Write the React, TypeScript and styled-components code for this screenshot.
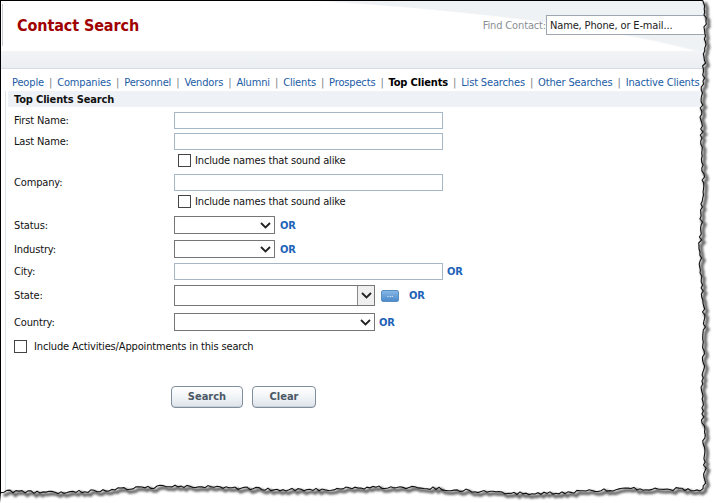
import styled, { createGlobalStyle } from "styled-components";

const GlobalStyle = createGlobalStyle`
  html, body {
    margin: 0;
    padding: 0;
    background: #fff;
  }
  body {
    font-family: "DejaVu Sans Condensed", "DejaVu Sans", sans-serif;
    font-stretch: semi-condensed;
    font-size: 11px;
    letter-spacing: -0.15px;
    color: #111;
  }
`;

const Frame = styled.div`
  position: relative;
  width: 714px;
  height: 503px;
  overflow: hidden;
  background: #fff;
`;

const Page = styled.div`
  height: 502px;
  border-left: 1px solid #000;
  border-top: 1px solid #000;
  display: flex;
  flex-direction: column;
`;

const Header = styled.div`
  height: 50px;
  display: flex;
  align-items: center;
  justify-content: space-between;
  background: radial-gradient(785px 110px at 0 100px, #fff 99%, #eff2f5 100%);
`;

const HeaderRule = styled.div`
  width: 1px;
  align-self: stretch;
  margin: 3px 0 5px 1px;
  background: #c8ced4;
`;

const Title = styled.h1`
  margin: 0 0 0 14px;
  flex: 1;
  font-family: "DejaVu Sans Condensed", "DejaVu Sans", sans-serif;
  font-size: 16px;
  letter-spacing: -0.1px;
  font-weight: bold;
  color: #a00000;
  padding-bottom: 2px;
`;

const Finder = styled.div`
  display: flex;
  align-items: center;
  margin-bottom: 2px;
`;

const FinderLabel = styled.span`
  color: #8a8f95;
`;

const FinderInput = styled.div`
  width: 160px;
  height: 18px;
  border: 1px solid #9ea7b0;
  background: #fff;
  color: #222;
  display: flex;
  align-items: center;
  padding-left: 3px;
  margin-right: 3px;
`;

const Band = styled.div`
  height: 17px;
  background: linear-gradient(#f2f4f6, #ebeef2);
  border-bottom: 1px solid #d6dce2;
`;

const Tabs = styled.div`
  height: 18px;
  display: flex;
  align-items: center;
  padding-left: 11px;
  white-space: nowrap;
  padding-top: 4px;
`;

const Tab = styled.span<{ $active?: boolean }>`
  color: ${({ $active }) => ($active ? "#000" : "#1b5ca6")};
  font-weight: ${({ $active }) => ($active ? "bold" : "normal")};
`;

const Sep = styled.span`
  color: #7a7f85;
  margin: 0 5px;
`;

const Panel = styled.div`
  flex: 1;
  margin-left: 4px;
  border-left: 1px solid #dbe2e9;
  display: flex;
  flex-direction: column;
`;

const PanelTitle = styled.div`
  margin-left: 2px;
  width: 692px;
  height: 16px;
  background: #eef2f6;
  font-weight: bold;
  padding-left: 6px;
  display: flex;
  align-items: center;
  box-sizing: border-box;
`;

const Form = styled.div`
  padding-left: 8px;
  display: flex;
  flex-direction: column;
`;

const Row = styled.div<{ $top: number; $h: number }>`
  margin-top: ${({ $top }) => $top}px;
  height: ${({ $h }) => $h}px;
  display: grid;
  grid-template-columns: 160px 1fr;
  align-items: center;
`;

const Label = styled.span`
  color: #111;
`;

const Controls = styled.div`
  display: flex;
  align-items: center;
  height: 100%;
`;

const TextBox = styled.div<{ $w: number }>`
  width: ${({ $w }) => $w}px;
  height: 100%;
  box-sizing: border-box;
  border: 1px solid #a8b7c5;
  background: #fff;
`;

const SelectBox = styled.div<{ $w: number }>`
  width: ${({ $w }) => $w}px;
  height: 100%;
  box-sizing: border-box;
  border: 1px solid #767676;
  background: #fff;
  display: flex;
  align-items: center;
  justify-content: flex-end;
  padding-right: 3px;
`;

const SelectButton = styled.div`
  width: 17px;
  height: 19px;
  box-sizing: border-box;
  border-left: 1px solid #8a8a8a;
  background: #efefef;
  display: flex;
  align-items: center;
  justify-content: center;
  margin-right: -3px;
`;

const Or = styled.span<{ $left: number }>`
  margin-left: ${({ $left }) => $left}px;
  color: #1e63b8;
  font-weight: 600;
`;

const Lookup = styled.div`
  margin-left: 6px;
  width: 18px;
  height: 12px;
  border-radius: 2px;
  background: linear-gradient(#86b7e6, #4d8bcb);
  border: 1px solid #5a8fc4;
  box-sizing: border-box;
  color: #fff;
  font-size: 8px;
  line-height: 8px;
  text-align: center;
`;

const CheckLine = styled.label<{ $gap: number }>`
  display: flex;
  align-items: center;
  gap: ${({ $gap }) => $gap}px;
  height: 100%;
`;

const Box = styled.span<{ $inset?: number }>`
  width: 13px;
  height: 13px;
  box-sizing: border-box;
  border: 1px solid #444;
  background: #fff;
  margin-left: ${({ $inset = 0 }) => $inset}px;
`;

const ActivityRow = styled.div`
  margin-top: 9px;
  height: 13px;
  display: flex;
`;

const Buttons = styled.div`
  margin-top: 33px;
  margin-left: 157px;
  display: flex;
  gap: 9px;
`;

const Button = styled.button<{ $w: number }>`
  width: ${({ $w }) => $w}px;
  height: 22px;
  border: 1px solid #7f8e9c;
  border-radius: 4px;
  background: linear-gradient(#ffffff 0%, #f1f4f7 50%, #dde3e9 100%);
  color: #4b5866;
  font-family: "DejaVu Sans Condensed", "DejaVu Sans", sans-serif;
  font-stretch: semi-condensed;
  font-size: 11px;
  font-weight: bold;
  padding: 0 0 2px;
  box-shadow: inset 0 -1px 0 #c7d0d8;
`;

const TearLayer = styled.svg`
  position: absolute;
  left: 0;
  top: 0;
  pointer-events: none;
`;

const Chevron = () => (
  <svg width="11" height="7" viewBox="0 0 11 7">
    <polyline points="1,1 5.5,5.5 10,1" fill="none" stroke="#222" strokeWidth="1.8" />
  </svg>
);

const rnd = (i: number) => {
  const s = Math.sin(i * 12.9898 + 78.233) * 43758.5453;
  return s - Math.floor(s);
};

function tearPaths() {
  const right: [number, number][] = [];
  for (let y = 0; y <= 487; y += 3) {
    const x =
      702.5 +
      Math.sin(y / 23) * 1.4 +
      Math.sin(y / 61 + 1) * 1.2 +
      (rnd(y) - 0.5) * 3.2;
    right.push([x, y]);
  }
  const bottom: [number, number][] = [];
  for (let x = 703; x >= 0; x -= 3) {
    const y =
      489.5 +
      Math.sin(x / 37) * 2 +
      Math.sin(x / 97 + 2) * 1.8 +
      (rnd(x + 1000) - 0.5) * 3;
    bottom.push([x, y]);
  }
  const edge = [...right, ...bottom];
  const line = edge.map(([x, y], i) => `${i ? "L" : "M"}${x.toFixed(1)},${y.toFixed(1)}`).join(" ");
  const fill = `${line} L0,503 L714,503 L714,0 Z`;
  return { line, fill };
}

const tabs = [
  "People",
  "Companies",
  "Personnel",
  "Vendors",
  "Alumni",
  "Clients",
  "Prospects",
  "Top Clients",
  "List Searches",
  "Other Searches",
  "Inactive Clients",
];

export default function App() {
  const { line, fill } = tearPaths();
  return (
    <Frame>
      <GlobalStyle />
      <Page>
        <Header>
          <HeaderRule />
          <Title>Contact Search</Title>
          <Finder>
            <FinderLabel>Find Contact:</FinderLabel>
            <FinderInput>Name, Phone, or E-mail...</FinderInput>
          </Finder>
        </Header>
        <Band />
        <Tabs>
          {tabs.map((t, i) => (
            <span key={t}>
              {i > 0 && <Sep>|</Sep>}
              <Tab $active={t === "Top Clients"}>{t}</Tab>
            </span>
          ))}
        </Tabs>
        <Panel>
          <PanelTitle>Top Clients Search</PanelTitle>
          <Form>
            <Row $top={5} $h={17}>
              <Label>First Name:</Label>
              <Controls>
                <TextBox $w={269} />
              </Controls>
            </Row>
            <Row $top={4} $h={17}>
              <Label>Last Name:</Label>
              <Controls>
                <TextBox $w={269} />
              </Controls>
            </Row>
            <Row $top={4} $h={13}>
              <span />
              <CheckLine $gap={4}>
                <Box $inset={4} />
                Include names that sound alike
              </CheckLine>
            </Row>
            <Row $top={7} $h={17}>
              <Label>Company:</Label>
              <Controls>
                <TextBox $w={269} />
              </Controls>
            </Row>
            <Row $top={4} $h={13}>
              <span />
              <CheckLine $gap={4}>
                <Box $inset={4} />
                Include names that sound alike
              </CheckLine>
            </Row>
            <Row $top={8} $h={18}>
              <Label>Status:</Label>
              <Controls>
                <SelectBox $w={101}>
                  <Chevron />
                </SelectBox>
                <Or $left={5}>OR</Or>
              </Controls>
            </Row>
            <Row $top={6} $h={18}>
              <Label>Industry:</Label>
              <Controls>
                <SelectBox $w={101}>
                  <Chevron />
                </SelectBox>
                <Or $left={5}>OR</Or>
              </Controls>
            </Row>
            <Row $top={5} $h={17}>
              <Label>City:</Label>
              <Controls>
                <TextBox $w={269} />
                <Or $left={4}>OR</Or>
              </Controls>
            </Row>
            <Row $top={5} $h={21}>
              <Label>State:</Label>
              <Controls>
                <SelectBox $w={201}>
                  <SelectButton>
                    <Chevron />
                  </SelectButton>
                </SelectBox>
                <Lookup>...</Lookup>
                <Or $left={10}>OR</Or>
              </Controls>
            </Row>
            <Row $top={7} $h={18}>
              <Label>Country:</Label>
              <Controls>
                <SelectBox $w={201}>
                  <Chevron />
                </SelectBox>
                <Or $left={4}>OR</Or>
              </Controls>
            </Row>
            <ActivityRow>
              <CheckLine $gap={7}>
                <Box />
                Include Activities/Appointments in this search
              </CheckLine>
            </ActivityRow>
            <Buttons>
              <Button $w={72}>Search</Button>
              <Button $w={64}>Clear</Button>
            </Buttons>
          </Form>
        </Panel>
      </Page>
      <TearLayer width="714" height="503" viewBox="0 0 714 503">
        <defs>
          <filter id="blur" x="-5%" y="-5%" width="110%" height="110%">
            <feGaussianBlur stdDeviation="1.2" />
          </filter>
        </defs>
        <path d={fill} fill="#fff" />
        <path
          d={line}
          fill="none"
          stroke="#6b6b6b"
          strokeWidth="3.5"
          transform="translate(2.5,2.5)"
          filter="url(#blur)"
        />
        <path d={line} fill="none" stroke="#111" strokeWidth="1.1" />
      </TearLayer>
    </Frame>
  );
}
